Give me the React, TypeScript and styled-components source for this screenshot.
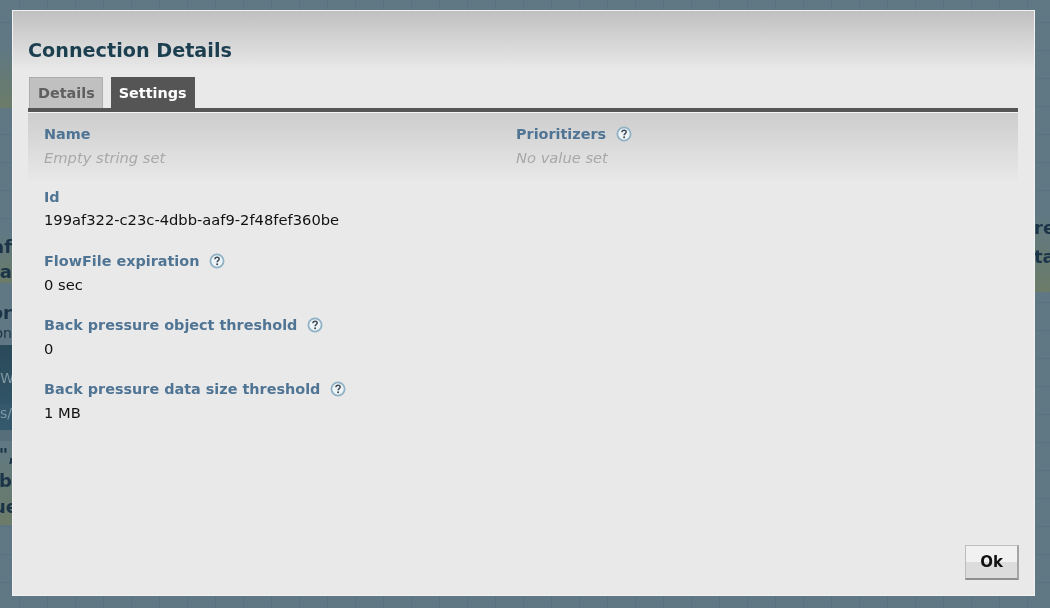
import React from 'react';
import styled, { createGlobalStyle } from 'styled-components';

const GlobalStyle = createGlobalStyle`
  html, body { margin: 0; padding: 0; }
  body { font-family: "DejaVu Sans", Verdana, sans-serif; overflow: hidden; }
`;

const Canvas = styled.div`
  position: relative;
  width: 1050px;
  height: 608px;
  overflow: hidden;
  background-color: #5f7883;
  background-image:
    linear-gradient(to right, #597280 1px, transparent 1px),
    linear-gradient(to bottom, #597280 1px, transparent 1px);
  background-size: 28px 28px;
  background-position: 19px 22px;
`;

const olive = 'linear-gradient(to bottom, #5f7883 0, #6c7c68 100%)';

// processor boxes of the flow behind the dialog
const Node = styled.div<{ $left: number; $top: number; $width: number; $height: number; $bg: string }>`
  position: absolute;
  left: ${({ $left }) => $left}px;
  top: ${({ $top }) => $top}px;
  width: ${({ $width }) => $width}px;
  height: ${({ $height }) => $height}px;
  background: ${({ $bg }) => $bg};
  overflow: hidden;
  white-space: nowrap;
  filter: blur(0.7px);
`;

const NodeText = styled.div<{ $align?: string; $small?: boolean; $color?: string; $line?: number; $shift?: number }>`
  display: flex;
  justify-content: ${({ $align }) => ($align === 'left' ? 'flex-start' : 'flex-end')};
  font-size: ${({ $small }) => ($small ? '14px' : '18px')};
  font-weight: ${({ $small }) => ($small ? 'normal' : 'bold')};
  color: ${({ $color }) => $color || '#1b3448'};
  line-height: ${({ $line }) => $line || 25}px;
  margin-right: ${({ $shift }) => -($shift || 0)}px;
`;

const Overlay = styled.div`
  position: absolute;
  inset: 0;
  padding: 10px 15px 12px 12px;
  display: flex;
`;

const Dialog = styled.div`
  flex: 1;
  display: flex;
  flex-direction: column;
  background: #e9e9e9;
  background-image: linear-gradient(to bottom, #c0c0c0 0, #e9e9e9 60px);
  border: 1px solid #f2f2f2;
  padding: 29px 16px 15px 15px;
  filter: blur(0.3px);
`;

const Title = styled.div`
  font-size: 19.2px;
  font-weight: bold;
  line-height: 22px;
  color: #1c3f50;
  margin-bottom: 15px;
`;

const TabBar = styled.div`
  display: flex;
  gap: 8px;
  padding-left: 1px;
  border-bottom: 4px solid #555555;
  box-shadow: 0 1px 0 #f5f5f5;
`;

const Tab = styled.div<{ $active?: boolean }>`
  height: 31px;
  box-sizing: border-box;
  padding: ${({ $active }) => ($active ? '0 8px' : '0 7px 0 8px')};
  display: flex;
  align-items: center;
  font-size: 14.4px;
  font-weight: bold;
  color: ${({ $active }) => ($active ? '#ffffff' : '#5f5f5f')};
  background: ${({ $active }) => ($active ? '#555555' : '#c0c0c0')};
  border: ${({ $active }) => ($active ? 'none' : '1px solid #adadad')};
  border-bottom: none;
`;

const Body = styled.div`
  flex: 1;
  display: flex;
  flex-direction: column;
  margin-top: 1px;
`;

const TopRow = styled.div`
  display: grid;
  grid-template-columns: 472px 1fr;
  height: 70px;
  padding: 11px 16px 0;
  box-sizing: border-box;
  background: linear-gradient(to bottom, #cdcdcd 0, #e9e9e9 100%);
`;

const Fields = styled.div`
  padding: 4px 16px 0;
  display: flex;
  flex-direction: column;
  gap: 20px;
`;

const Field = styled.div<{ $tight?: boolean }>`
  margin-bottom: ${({ $tight }) => ($tight ? 1 : 0)}px;
`;

const Label = styled.div<{ $tight?: boolean }>`
  display: flex;
  align-items: center;
  gap: 10px;
  font-size: 14.4px;
  font-weight: bold;
  line-height: 20px;
  color: #4f7494;
  height: 20px;
  margin-bottom: ${({ $tight }) => ($tight ? 3 : 4)}px;
`;

const Value = styled.div<{ $empty?: boolean }>`
  font-size: 14.7px;
  line-height: 20px;
  color: ${({ $empty }) => ($empty ? '#a8a8a8' : '#111111')};
  font-style: ${({ $empty }) => ($empty ? 'italic' : 'normal')};
`;

const Footer = styled.div`
  display: flex;
  justify-content: flex-end;
  margin-right: -1px;
`;

const OkButton = styled.button`
  width: 54px;
  height: 35px;
  padding: 0;
  font-family: inherit;
  font-size: 15px;
  font-weight: bold;
  color: #111111;
  background: linear-gradient(to bottom, #f1f1f1 0, #f1f1f1 50%, #dcdcdc 50%, #dcdcdc 100%);
  border: 1px solid #bdbdbd;
  border-bottom: 2px solid #8f8f8f;
  border-right: 2px solid #a5a5a5;
`;

const HelpIcon = () => (
  <svg width="16" height="16" viewBox="0 0 16 16">
    <circle cx="8" cy="8" r="6.6" fill="#eef3f6" stroke="#8fb2c6" strokeWidth="1.8" />
    <path d="M5.9 6.3 C6 4.9 7 4.3 8.1 4.3 C9.3 4.3 10.2 5 10.2 6.1 C10.2 7.5 8.2 7.6 8.1 9.2" fill="none" stroke="#3c4c58" strokeWidth="1.5" />
    <circle cx="8.1" cy="11.3" r="1" fill="#3c4c58" />
  </svg>
);

const App: React.FC = () => {
  return (
    <Canvas>
      <GlobalStyle />
      <Node $left={0} $top={48} $width={14} $height={60} $bg={olive} />
      <Node $left={0} $top={234} $width={12} $height={49} $bg={olive}>
        <NodeText>af</NodeText>
        <NodeText>a</NodeText>
      </Node>
      <Node $left={0} $top={302} $width={12} $height={43} $bg="#5f7883">
        <NodeText $line={22}>or</NodeText>
        <NodeText $small $line={18}>on</NodeText>
      </Node>
      <Node $left={0} $top={345} $width={14} $height={85} $bg="linear-gradient(to bottom, #2a4a5a 0, #34596c 100%)">
        <NodeText $small $color="#7f98a4" $line={66}>d/W</NodeText>
      </Node>
      <Node $left={0} $top={404} $width={12} $height={26} $bg="#34596c">
        <NodeText $small $color="#7f98a4" $line={18}>s/</NodeText>
      </Node>
      <Node $left={0} $top={430} $width={14} $height={11} $bg="#566e79" />
      <Node $left={0} $top={441} $width={12} $height={84} $bg={olive}>
        <NodeText $line={27} $shift={3}>",</NodeText>
        <NodeText $line={26}>b</NodeText>
        <NodeText $line={26} $shift={6}>ue</NodeText>
      </Node>
      <Node $left={1034} $top={212} $width={16} $height={80} $bg={olive}>
        <NodeText $align="left" $line={32}>re</NodeText>
        <NodeText $align="left">ta</NodeText>
      </Node>
      <Overlay>
        <Dialog>
          <Title>Connection Details</Title>
          <TabBar>
            <Tab>Details</Tab>
            <Tab $active>Settings</Tab>
          </TabBar>
          <Body>
            <TopRow>
              <Field>
                <Label>Name</Label>
                <Value $empty>Empty string set</Value>
              </Field>
              <Field>
                <Label>Prioritizers <HelpIcon /></Label>
                <Value $empty>No value set</Value>
              </Field>
            </TopRow>
            <Fields>
              <Field $tight>
                <Label $tight>Id</Label>
                <Value>199af322-c23c-4dbb-aaf9-2f48fef360be</Value>
              </Field>
              <Field>
                <Label>FlowFile expiration <HelpIcon /></Label>
                <Value>0 sec</Value>
              </Field>
              <Field>
                <Label>Back pressure object threshold <HelpIcon /></Label>
                <Value>0</Value>
              </Field>
              <Field>
                <Label>Back pressure data size threshold <HelpIcon /></Label>
                <Value>1 MB</Value>
              </Field>
            </Fields>
          </Body>
          <Footer>
            <OkButton>Ok</OkButton>
          </Footer>
        </Dialog>
      </Overlay>
    </Canvas>
  );
};

export default App;
